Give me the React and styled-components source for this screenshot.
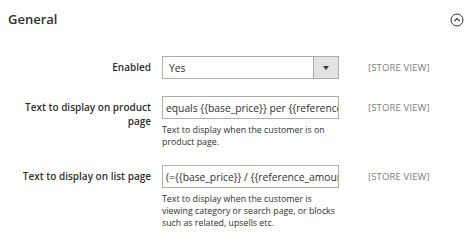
import styled, { createGlobalStyle } from "styled-components";

const GlobalStyle = createGlobalStyle`
  body {
    margin: 0;
    background: #ffffff;
    font-family: "Open Sans", "Liberation Sans", sans-serif;
    color: #303030;
  }
`;

const Section = styled.div`
  width: 474px;
  height: 252px;
  overflow: hidden;
`;

const Header = styled.div`
  display: flex;
  align-items: center;
  justify-content: space-between;
  padding: 8px 8px 0 8px;
  height: 22px;
`;

const Title = styled.h2`
  margin: 0;
  font-size: 13px;
  font-weight: 600;
  line-height: 20px;
  color: #303030;
`;

const Toggle = styled.svg`
  width: 14px;
  height: 14px;
  margin-right: 2px;
  margin-top: 1px;
`;

const Fields = styled.div`
  display: flex;
  flex-direction: column;
  gap: 17px;
  padding-top: 26px;
`;

const Row = styled.div`
  display: grid;
  grid-template-columns: 151px 177px auto;
  column-gap: 11px;
  align-items: start;
`;

const Label = styled.label`
  text-align: right;
  font-size: 10px;
  font-weight: 600;
  line-height: 14px;
  padding-top: 4px;
  color: #303030;
`;

const Control = styled.div`
  display: flex;
  flex-direction: column;
`;

const Select = styled.div`
  box-sizing: border-box;
  height: 23px;
  border: 1px solid #adadad;
  background: #ffffff;
  display: flex;
  align-items: center;
  font-size: 10.3px;
  padding-left: 6px;
  color: #303030;
`;

const SelectText = styled.span`
  flex: 1;
`;

const Arrow = styled.span`
  width: 24px;
  height: 100%;
  background: #e3e3e3;
  border-left: 1px solid #adadad;
  display: flex;
  align-items: center;
  justify-content: center;
  &::after {
    content: "";
    border-left: 3px solid transparent;
    border-right: 3px solid transparent;
    border-top: 4px solid #41362f;
  }
`;

const TextInput = styled.input`
  box-sizing: border-box;
  width: 100%;
  height: 23px;
  margin: 0;
  border: 1px solid #adadad;
  border-radius: 0;
  background: #ffffff;
  padding: 0 0 0 3px;
  font-family: "Open Sans", "Liberation Sans", sans-serif;
  font-size: 10.3px;
  color: #303030;
  outline: none;
`;

const Note = styled.div`
  font-size: 8.8px;
  line-height: 12px;
  margin-top: 5px;
  color: #303030;
  margin-right: -4px;
`;

const Scope = styled.span`
  font-size: 9.6px;
  line-height: 23px;
  color: #808080;
  padding-left: 18px;
  letter-spacing: 0.1px;
`;

const fields = [
  { label: "Enabled", value: "Yes", select: true },
  {
    label: "Text to display on product page",
    value: "equals {{base_price}} per {{reference_amount}} {{reference_unit}}",
    note: "Text to display when the customer is on product page.",
  },
  {
    label: "Text to display on list page",
    value: "(={{base_price}} / {{reference_amount}} {{reference_unit}})",
    note: "Text to display when the customer is viewing category or search page, or blocks such as related, upsells etc.",
  },
];

const App = () => {
  return (
    <Section>
      <GlobalStyle />
      <Header>
        <Title>General</Title>
        <Toggle viewBox="0 0 14 14">
          <circle cx="7" cy="7" r="6" fill="none" stroke="#303030" strokeWidth="1" />
          <path d="M4.3 8.2 L7 5.5 L9.7 8.2" fill="none" stroke="#303030" strokeWidth="1.1" />
        </Toggle>
      </Header>
      <Fields>
        {fields.map((f) => (
          <Row key={f.label}>
            <Label>{f.label}</Label>
            <Control>
              {f.select ? (
                <Select>
                  <SelectText>{f.value}</SelectText>
                  <Arrow />
                </Select>
              ) : (
                <TextInput readOnly value={f.value} />
              )}
              {f.note && <Note>{f.note}</Note>}
            </Control>
            <Scope>[STORE VIEW]</Scope>
          </Row>
        ))}
      </Fields>
    </Section>
  );
};

export default App;
